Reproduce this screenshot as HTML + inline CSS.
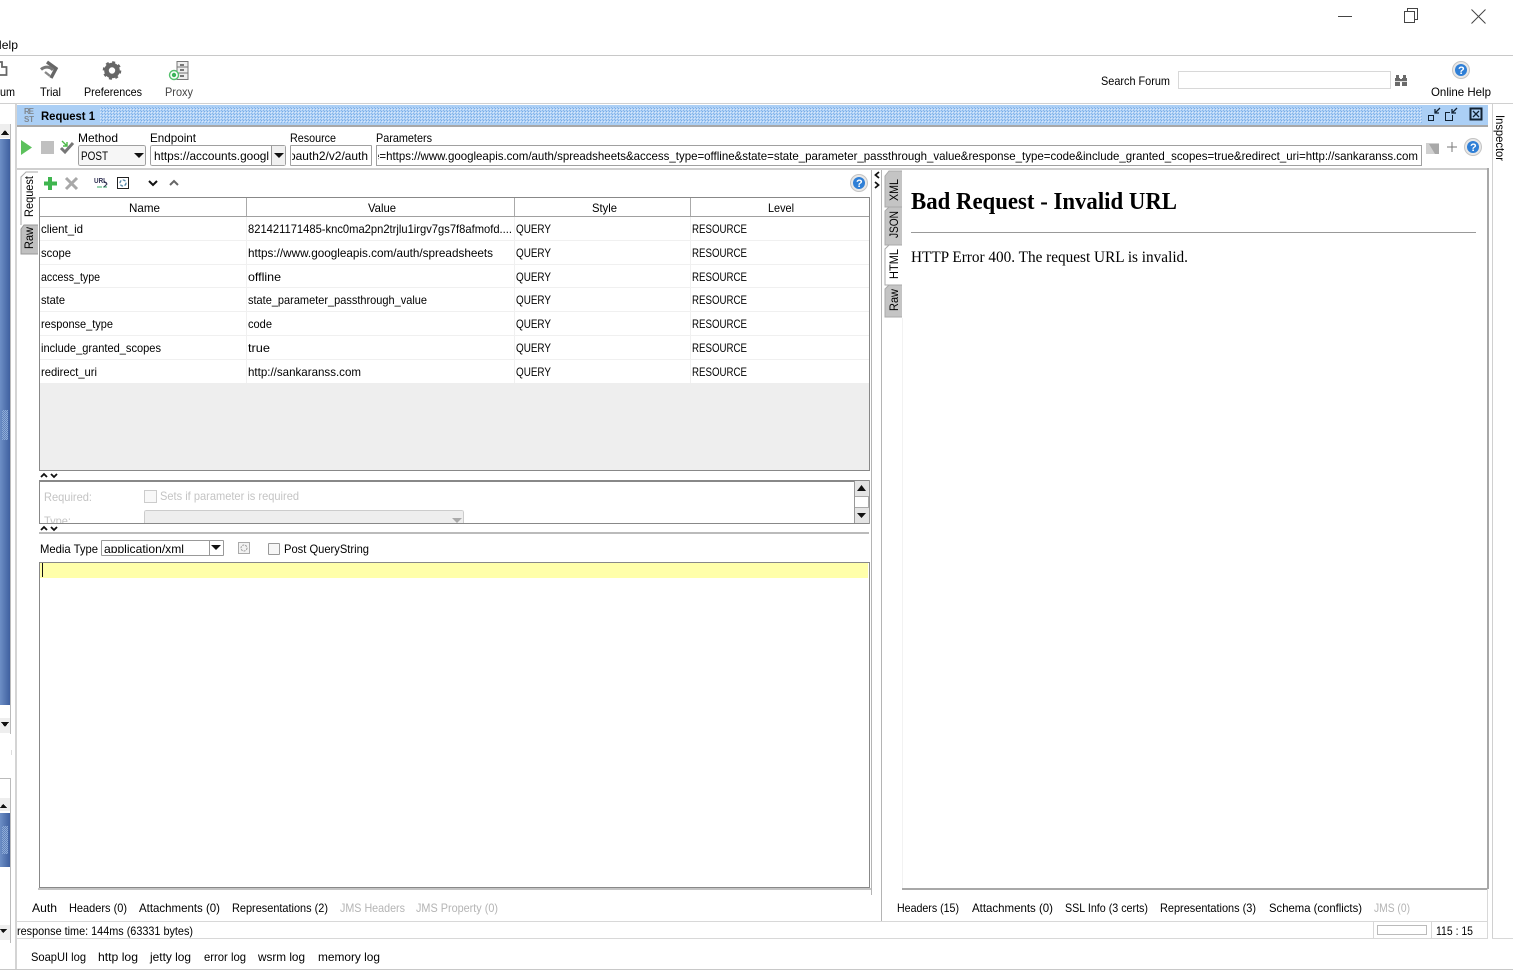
<!DOCTYPE html>
<html><head><meta charset="utf-8"><title>SoapUI</title>
<style>
html,body{margin:0;padding:0;background:#fff;width:1513px;height:970px;overflow:hidden}
body{position:relative}
svg{display:block}
#root{filter:blur(0.3px)}
.sb{position:absolute;left:0;width:10px;background:linear-gradient(to right,#6d8fc6,#3f609f)}
.sd{position:absolute;left:2px;width:6px;background:repeating-conic-gradient(#8fabd6 0 25%,#5f82bc 0 50%) 0 0/2px 2px}
text{font-family:"Liberation Sans",sans-serif;font-size:12px;fill:#000}
.g{fill:#b4b4b4}
.d{fill:#c4c4c4}
.s{font-family:"Liberation Serif",serif;fill:#000}
</style></head><body>
<svg id="root" width="1513" height="970" viewBox="0 0 1513 970" xmlns="http://www.w3.org/2000/svg" shape-rendering="crispEdges">
<defs>
<pattern id="dots" width="3" height="3" patternUnits="userSpaceOnUse"><rect width="3" height="3" fill="#b2d2f6"/><rect width="1" height="1" fill="#78ace6"/><rect x="1" y="1" width="1" height="1" fill="#dbe9fa"/><rect x="2" y="2" width="1" height="1" fill="#86b6ea"/></pattern>
</defs>

<!-- window controls -->
<g fill="none" stroke="#444" stroke-width="1">
<path d="M1338 16.500H1352"/>
<path d="M1404.500 11.500H1414.500V22.500H1404.500ZM1407.500 11V8.500H1417.500V19.500H1415"/>
<path d="M1471.500 9.500L1485.500 23.500M1485.500 9.500L1471.500 23.500" shape-rendering="auto"/>
</g>

<!-- menu + toolbar -->
<text x="-7" y="49" textLength="25" lengthAdjust="spacingAndGlyphs">Help</text>
<rect x="0" y="55" width="1513" height="1" fill="#c8c8c8"/>
<rect x="0" y="103" width="1513" height="1" fill="#d0d0d0"/>
<g shape-rendering="auto">
<path d="M0 62H2V67H6.500V75H-2" fill="none" stroke="#666" stroke-width="1.800"/>
<path d="M47 62L56 68.500L51 78" fill="none" stroke="#666" stroke-width="3.400"/>
<path d="M41 69.500C45 66 50 66.500 53 70" fill="none" stroke="#777" stroke-width="3"/>
<path d="M45 72L50 76" fill="none" stroke="#888" stroke-width="2.400"/>
<circle cx="112" cy="70.500" r="5.500" fill="none" stroke="#666" stroke-width="4.600"/>
<circle cx="112" cy="70.500" r="8.300" fill="none" stroke="#666" stroke-width="2" stroke-dasharray="3 3.500"/>
<rect x="177" y="61.500" width="11" height="18" fill="#eee" stroke="#777"/>
<path d="M177 67H188M177 73H188" stroke="#777"/>
<rect x="180" y="64" width="4" height="2" fill="#777"/><rect x="180" y="69" width="4" height="2" fill="#777"/><rect x="180" y="75" width="4" height="2" fill="#777"/>
<circle cx="174" cy="75" r="4.500" fill="#fff" stroke="#54c06c" stroke-width="1.400"/><circle cx="174" cy="75" r="2.200" fill="#3cb45a"/>
</g>
<text x="0" y="96" textLength="15" lengthAdjust="spacingAndGlyphs">um</text>
<text x="40" y="96" textLength="21" lengthAdjust="spacingAndGlyphs">Trial</text>
<text x="84" y="96" textLength="58" lengthAdjust="spacingAndGlyphs">Preferences</text>
<text x="165" y="96" textLength="28" lengthAdjust="spacingAndGlyphs" style="fill:#444">Proxy</text>
<text x="1101" y="85" textLength="69" lengthAdjust="spacingAndGlyphs">Search Forum</text>
<rect x="1178.500" y="71.500" width="212" height="17" fill="#fff" stroke="#d8d8d8"/>
<g fill="#6a6a6a"><rect x="1395" y="78" width="5" height="8"/><rect x="1402" y="78" width="5" height="8"/><rect x="1396" y="75" width="3" height="3"/><rect x="1403" y="75" width="3" height="3"/><rect x="1400" y="79" width="2" height="3"/><rect x="1395" y="81" width="12" height="1" fill="#ddd"/></g>
<g shape-rendering="auto">
<circle cx="1461" cy="70" r="8.500" fill="#e8e8e8" stroke="#c4c4c4"/><circle cx="1461" cy="70" r="6" fill="#2f7fd6"/>
<text x="1458" y="74" style="font-size:11px;font-weight:bold;fill:#fff">?</text>
</g>
<text x="1431" y="96" textLength="60" lengthAdjust="spacingAndGlyphs">Online Help</text>

<!-- outer structure left -->
<rect x="15" y="104" width="2" height="866" fill="#d4d4d4"/>
<rect x="10" y="124" width="1" height="610" fill="#bbb"/>
<rect x="0" y="124" width="10" height="14" fill="#eee"/>
<path d="M1 135L5 130L9 135Z" fill="#111"/>
<rect x="0" y="718" width="10" height="15" fill="#eee"/>
<path d="M1 722L5 727L9 722Z" fill="#111"/>
<rect x="10" y="778" width="1" height="165" fill="#bbb"/>
<rect x="0" y="778" width="10" height="1" fill="#bbb"/>
<rect x="0" y="798" width="10" height="13" fill="#eee"/>
<path d="M0 808L3 804L7 808Z" fill="#111"/>
<rect x="0" y="925" width="10" height="15" fill="#eee"/>
<path d="M0 929L3 933L7 929Z" fill="#111"/>
<rect x="11" y="750" width="1" height="5" fill="#ddd"/>

<!-- title bar -->
<rect x="17" y="105" width="1471" height="20" fill="#abcff5"/>
<rect x="17" y="125" width="1471" height="2" fill="#a8a8a8"/>
<rect x="100" y="107" width="1322" height="16" fill="url(#dots)"/>
<text x="24" y="114" textLength="10" style="font-size:8px;font-weight:bold;fill:#808890">RE</text>
<text x="24" y="122" textLength="10" style="font-size:8px;font-weight:bold;fill:#808890">ST</text>
<text x="41" y="120" textLength="54" lengthAdjust="spacingAndGlyphs" style="font-weight:bold;fill:#000">Request 1</text>
<g fill="none" stroke="#123" stroke-width="1.300">
<rect x="1428.500" y="115.500" width="5" height="5"/><path d="M1440 108L1435 113M1435 109V113H1439" shape-rendering="auto"/>
<path d="M1450 112.500H1445.500V120.500H1452.500V115"/><path d="M1457 108L1452 113M1452 109V113H1456" shape-rendering="auto"/>
<rect x="1470.500" y="108.500" width="11" height="11" stroke-width="1.600"/><path d="M1473 111L1479 117M1479 111L1473 117" shape-rendering="auto"/>
</g>

<!-- request toolbar -->
<path d="M21 140L32 147.500L21 155Z" fill="#5cc15c" shape-rendering="auto"/>
<rect x="41" y="141" width="13" height="13" fill="#c0c0c0"/>
<path d="M61 148L65 152L73 143" fill="none" stroke="#777" stroke-width="3" shape-rendering="auto"/>
<path d="M62 141L67 146M67 142V146H63" fill="none" stroke="#4cb848" stroke-width="1.400" shape-rendering="auto"/>
<text x="78" y="142" textLength="40" lengthAdjust="spacingAndGlyphs">Method</text>
<text x="150" y="142" textLength="46" lengthAdjust="spacingAndGlyphs">Endpoint</text>
<text x="290" y="142" textLength="46" lengthAdjust="spacingAndGlyphs">Resource</text>
<text x="376" y="142" textLength="56" lengthAdjust="spacingAndGlyphs">Parameters</text>
<g fill="#fff" stroke="#a0a0a0" stroke-width="1">
<rect x="78.500" y="145.500" width="67" height="20" rx="2" fill="#f6f6f6"/>
<rect x="150.500" y="145.500" width="135" height="20" rx="2"/>
<rect x="290.500" y="145.500" width="81" height="20" rx="1"/>
<rect x="376.500" y="145.500" width="1045" height="20"/>
</g>
<rect x="271" y="146" width="14" height="19" fill="#f0f0f0"/><rect x="271" y="146" width="1" height="19" fill="#999"/>
<path d="M134 153H144L139 158Z" fill="#111" shape-rendering="auto"/>
<path d="M274 153H284L279 158Z" fill="#111" shape-rendering="auto"/>
<text x="81" y="160" textLength="27" lengthAdjust="spacingAndGlyphs">POST</text>
<text x="154" y="160" textLength="115" lengthAdjust="spacingAndGlyphs">https://accounts.googl</text>
<svg x="292" y="147" width="78" height="18"><text x="-3" y="13" textLength="79" lengthAdjust="spacingAndGlyphs">oauth2/v2/auth</text></svg>
<svg x="378" y="147" width="1042" height="18"><text x="-5" y="13" textLength="1045" lengthAdjust="spacingAndGlyphs">e=https://www.googleapis.com/auth/spreadsheets&amp;access_type=offline&amp;state=state_parameter_passthrough_value&amp;response_type=code&amp;include_granted_scopes=true&amp;redirect_uri=http://sankaranss.com</text></svg>
<rect x="1426" y="143" width="13" height="11" fill="#d0d0d0"/><path d="M1429 144L1435 154H1439V144Z" fill="#a8a8a8" shape-rendering="auto"/>
<path d="M1452 142V152M1447 147H1457" stroke="#777" stroke-width="1.300"/>
<g shape-rendering="auto"><circle cx="1473" cy="147" r="8.500" fill="#e8e8e8" stroke="#c4c4c4"/><circle cx="1473" cy="147" r="6" fill="#2f7fd6"/>
<text x="1470" y="151" style="font-size:11px;font-weight:bold;fill:#fff">?</text></g>
<rect x="17" y="168" width="1471" height="2" fill="#cfcfcf"/>

<!-- left tabs -->
<path d="M38 172H26L21 177V225" fill="#fff" stroke="#aaa" stroke-width="1" shape-rendering="auto"/>
<path d="M38 225H24L21 229V254H38V225Z" fill="#c0c0c0" shape-rendering="auto"/>
<path d="M38 225H24L21 229V254H38" fill="none" stroke="#999" stroke-width="1" shape-rendering="auto"/>
<text transform="translate(33,217) rotate(-90)" textLength="41" lengthAdjust="spacingAndGlyphs">Request</text>
<text transform="translate(33,249) rotate(-90)" textLength="22" lengthAdjust="spacingAndGlyphs">Raw</text>

<!-- param toolbar -->
<path d="M50 177V190M44 183.500H57" stroke="#3fb54f" stroke-width="3.600"/>
<path d="M66 178L77 189M77 178L66 189" stroke="#a8a8a8" stroke-width="3" shape-rendering="auto"/>
<text x="94" y="183" textLength="13" lengthAdjust="spacingAndGlyphs" style="font-size:7px;font-weight:bold;fill:#335">URL</text>
<path d="M97 187H102M103 187H107" stroke="#3a6" stroke-width="1"/><path d="M104 181L107 184L104 187" fill="none" stroke="#335" shape-rendering="auto"/>
<rect x="117.500" y="177.500" width="11" height="11" fill="#fff" stroke="#222"/><circle cx="123" cy="183" r="3" fill="none" stroke="#58a" stroke-width="1.300" stroke-dasharray="3 1.500" shape-rendering="auto"/>
<path d="M149 181L153 185L157 181" fill="none" stroke="#111" stroke-width="2" shape-rendering="auto"/>
<path d="M170 185L174 181L178 185" fill="none" stroke="#666" stroke-width="2" shape-rendering="auto"/>
<g shape-rendering="auto"><circle cx="859" cy="183" r="8.500" fill="#e8e8e8" stroke="#c4c4c4"/><circle cx="859" cy="183" r="6" fill="#2f7fd6"/>
<text x="856" y="187" style="font-size:11px;font-weight:bold;fill:#fff">?</text></g>

<!-- table -->
<rect x="39.500" y="197.500" width="830" height="273" fill="#fff" stroke="#888"/>
<rect x="40" y="383" width="829" height="87" fill="#eeeeee"/>
<rect x="40" y="216" width="829" height="1" fill="#a0a0a0"/>
<g fill="#aaa"><rect x="246" y="198" width="1" height="18"/><rect x="514" y="198" width="1" height="18"/><rect x="690" y="198" width="1" height="18"/></g>
<g fill="#f0f0f0">
<rect x="40" y="240" width="829" height="1"/><rect x="40" y="264" width="829" height="1"/><rect x="40" y="287" width="829" height="1"/><rect x="40" y="311" width="829" height="1"/><rect x="40" y="335" width="829" height="1"/><rect x="40" y="359" width="829" height="1"/>
<rect x="246" y="217" width="1" height="166"/><rect x="514" y="217" width="1" height="166"/><rect x="690" y="217" width="1" height="166"/>
</g>
<text x="129" y="212" textLength="31" lengthAdjust="spacingAndGlyphs">Name</text>
<text x="368" y="212" textLength="28" lengthAdjust="spacingAndGlyphs">Value</text>
<text x="592" y="212" textLength="25" lengthAdjust="spacingAndGlyphs">Style</text>
<text x="768" y="212" textLength="26" lengthAdjust="spacingAndGlyphs">Level</text>

<text x="41" y="233" textLength="42" lengthAdjust="spacingAndGlyphs">client_id</text>
<text x="248" y="233" textLength="264" lengthAdjust="spacingAndGlyphs">821421171485-knc0ma2pn2trjlu1irgv7gs7f8afmofd....</text>
<text x="516" y="233" textLength="35" lengthAdjust="spacingAndGlyphs">QUERY</text>
<text x="692" y="233" textLength="55" lengthAdjust="spacingAndGlyphs">RESOURCE</text>

<text x="41" y="257" textLength="30" lengthAdjust="spacingAndGlyphs">scope</text>
<text x="248" y="257" textLength="245" lengthAdjust="spacingAndGlyphs">https://www.googleapis.com/auth/spreadsheets</text>
<text x="516" y="257" textLength="35" lengthAdjust="spacingAndGlyphs">QUERY</text>
<text x="692" y="257" textLength="55" lengthAdjust="spacingAndGlyphs">RESOURCE</text>

<text x="41" y="281" textLength="59" lengthAdjust="spacingAndGlyphs">access_type</text>
<text x="248" y="281" textLength="33" lengthAdjust="spacingAndGlyphs">offline</text>
<text x="516" y="281" textLength="35" lengthAdjust="spacingAndGlyphs">QUERY</text>
<text x="692" y="281" textLength="55" lengthAdjust="spacingAndGlyphs">RESOURCE</text>

<text x="41" y="304" textLength="24" lengthAdjust="spacingAndGlyphs">state</text>
<text x="248" y="304" textLength="179" lengthAdjust="spacingAndGlyphs">state_parameter_passthrough_value</text>
<text x="516" y="304" textLength="35" lengthAdjust="spacingAndGlyphs">QUERY</text>
<text x="692" y="304" textLength="55" lengthAdjust="spacingAndGlyphs">RESOURCE</text>

<text x="41" y="328" textLength="72" lengthAdjust="spacingAndGlyphs">response_type</text>
<text x="248" y="328" textLength="24" lengthAdjust="spacingAndGlyphs">code</text>
<text x="516" y="328" textLength="35" lengthAdjust="spacingAndGlyphs">QUERY</text>
<text x="692" y="328" textLength="55" lengthAdjust="spacingAndGlyphs">RESOURCE</text>

<text x="41" y="352" textLength="120" lengthAdjust="spacingAndGlyphs">include_granted_scopes</text>
<text x="248" y="352" textLength="22" lengthAdjust="spacingAndGlyphs">true</text>
<text x="516" y="352" textLength="35" lengthAdjust="spacingAndGlyphs">QUERY</text>
<text x="692" y="352" textLength="55" lengthAdjust="spacingAndGlyphs">RESOURCE</text>

<text x="41" y="376" textLength="56" lengthAdjust="spacingAndGlyphs">redirect_uri</text>
<text x="248" y="376" textLength="113" lengthAdjust="spacingAndGlyphs">http://sankaranss.com</text>
<text x="516" y="376" textLength="35" lengthAdjust="spacingAndGlyphs">QUERY</text>
<text x="692" y="376" textLength="55" lengthAdjust="spacingAndGlyphs">RESOURCE</text>

<!-- splitter arrows -->
<g fill="none" stroke="#111" stroke-width="1.800" shape-rendering="auto">
<path d="M41 477L44 474L47 477M51 474L54 477L57 474"/>
<path d="M41 530L44 527L47 530M51 527L54 530L57 527"/>
</g>

<!-- details box -->
<svg x="39" y="480" width="831" height="44">
<rect x="0.500" y="0.500" width="830" height="43" fill="#fff"/>
<text x="5" y="21" textLength="48" lengthAdjust="spacingAndGlyphs" class="d">Required:</text>
<rect x="105.500" y="10.500" width="12" height="12" fill="#f8f8f8" stroke="#ccc"/>
<text x="121" y="20" textLength="139" lengthAdjust="spacingAndGlyphs" class="d">Sets if parameter is required</text>
<text x="5" y="45" textLength="27" lengthAdjust="spacingAndGlyphs" class="d">Type:</text>
<rect x="105.500" y="30.500" width="319" height="20" rx="2" fill="#eeeeee" stroke="#ccc"/>
<path d="M413 38H423L418 43Z" fill="#aaa" shape-rendering="auto"/>
</svg>
<rect x="39" y="480" width="831" height="2" fill="#888"/>
<rect x="39" y="523" width="831" height="1" fill="#888"/>
<rect x="39" y="480" width="1" height="44" fill="#888"/><rect x="869" y="480" width="1" height="44" fill="#999"/>
<rect x="854" y="481" width="15" height="15" fill="#e4e4e4"/><rect x="854" y="508" width="15" height="15" fill="#e4e4e4"/>
<rect x="854.500" y="496.500" width="14" height="11" fill="#fff" stroke="#aaa" stroke-width="1"/>
<rect x="854" y="481" width="1" height="42" fill="#999"/>
<path d="M857 491L861.500 485L866 491Z M857 513H866L861.500 518Z" fill="#111" shape-rendering="auto"/>
<rect x="39" y="532" width="830" height="2" fill="#bbb"/>

<!-- media type row -->
<text x="40" y="553" textLength="58" lengthAdjust="spacingAndGlyphs">Media Type</text>
<rect x="101.500" y="540.500" width="122" height="15" rx="1" fill="#fff" stroke="#999"/>
<svg x="103" y="541" width="105" height="12"><text x="1" y="12" textLength="80" lengthAdjust="spacingAndGlyphs">application/xml</text></svg>
<rect x="209" y="541" width="1" height="14" fill="#999"/>
<path d="M211 545H221L216 550Z" fill="#111" shape-rendering="auto"/>
<rect x="238.500" y="542.500" width="11" height="11" fill="#f2f2f2" stroke="#aaa"/><circle cx="244" cy="548" r="3" fill="none" stroke="#999" stroke-dasharray="2 1" shape-rendering="auto"/>
<rect x="268.500" y="543.500" width="11" height="11" rx="1" fill="#f6f6f6" stroke="#999"/>
<text x="284" y="553" textLength="85" lengthAdjust="spacingAndGlyphs">Post QueryString</text>

<!-- editor -->
<rect x="39.500" y="562.500" width="830" height="325" fill="#fff" stroke="#888"/>
<rect x="40" y="563" width="828" height="15" fill="#ffffaa"/>
<rect x="42" y="563" width="1" height="14" fill="#111"/>
<rect x="38" y="888" width="834" height="2" fill="#c4c4c4"/>
<rect x="871" y="170" width="1" height="725" fill="#b4b4b4"/>
<rect x="881" y="170" width="1" height="751" fill="#b4b4b4"/>

<!-- horizontal splitter -->
<g fill="none" stroke="#111" stroke-width="1.800" shape-rendering="auto">
<path d="M879 172L875.500 175L879 178M875 182L878.500 185L875 188"/>
</g>

<!-- right tabs -->
<g shape-rendering="auto">
<path d="M902 171H889L885 176V207H902Z" fill="#c4c4c4"/>
<path d="M902 207H889L885 211V245H902Z" fill="#c4c4c4"/>
<path d="M902 285H889L885 289V317H902Z" fill="#c4c4c4"/>
<path d="M902 245H889L885 249V285H902Z" fill="#fff"/>
<g fill="none" stroke="#aaa" stroke-width="1">
<path d="M902 171H889L885 176V207H902"/>
<path d="M902 207H889L885 211V245H902"/>
<path d="M902 285H889L885 289V317H902"/>
<path d="M902 245H889L885 249V285H902"/>
</g>
</g>
<text transform="translate(898,201) rotate(-90)" textLength="22" lengthAdjust="spacingAndGlyphs">XML</text>
<text transform="translate(898,238) rotate(-90)" textLength="27" lengthAdjust="spacingAndGlyphs">JSON</text>
<text transform="translate(898,279) rotate(-90)" textLength="30" lengthAdjust="spacingAndGlyphs">HTML</text>
<text transform="translate(898,311) rotate(-90)" textLength="22" lengthAdjust="spacingAndGlyphs">Raw</text>

<!-- html response -->
<text class="s" x="911" y="209" textLength="266" lengthAdjust="spacingAndGlyphs" style="font-size:24px;font-weight:bold">Bad Request - Invalid URL</text>
<rect x="911" y="232" width="565" height="1" fill="#999"/>
<text class="s" x="911" y="262" textLength="277" lengthAdjust="spacingAndGlyphs" style="font-size:16px">HTTP Error 400. The request URL is invalid.</text>
<rect x="902" y="318" width="1" height="571" fill="#f2f2f2"/>
<rect x="902" y="888" width="586" height="2" fill="#a8a8a8"/>
<rect x="1487" y="168" width="2" height="721" fill="#a8a8a8"/>

<!-- inspector -->
<rect x="1492" y="104" width="1" height="834" fill="#d0d0d0"/>
<text transform="translate(1496,115) rotate(90)" textLength="46" lengthAdjust="spacingAndGlyphs">Inspector</text>

<!-- bottom tabs -->
<text x="32" y="912" textLength="25" lengthAdjust="spacingAndGlyphs">Auth</text>
<text x="69" y="912" textLength="58" lengthAdjust="spacingAndGlyphs">Headers (0)</text>
<text x="139" y="912" textLength="81" lengthAdjust="spacingAndGlyphs">Attachments (0)</text>
<text x="232" y="912" textLength="96" lengthAdjust="spacingAndGlyphs">Representations (2)</text>
<text x="340" y="912" textLength="65" lengthAdjust="spacingAndGlyphs" class="g">JMS Headers</text>
<text x="416" y="912" textLength="82" lengthAdjust="spacingAndGlyphs" class="g">JMS Property (0)</text>
<text x="897" y="912" textLength="62" lengthAdjust="spacingAndGlyphs">Headers (15)</text>
<text x="972" y="912" textLength="81" lengthAdjust="spacingAndGlyphs">Attachments (0)</text>
<text x="1065" y="912" textLength="83" lengthAdjust="spacingAndGlyphs">SSL Info (3 certs)</text>
<text x="1160" y="912" textLength="96" lengthAdjust="spacingAndGlyphs">Representations (3)</text>
<text x="1269" y="912" textLength="93" lengthAdjust="spacingAndGlyphs">Schema (conflicts)</text>
<text x="1374" y="912" textLength="36" lengthAdjust="spacingAndGlyphs" class="g">JMS (0)</text>

<!-- status bar -->
<rect x="17" y="921" width="1471" height="1" fill="#d8d8d8"/>
<rect x="17" y="938" width="1471" height="1" fill="#d8d8d8"/>
<rect x="1492" y="938" width="21" height="1" fill="#d8d8d8"/>
<rect x="1487" y="889" width="1" height="49" fill="#d8d8d8"/>
<text x="17" y="935" textLength="176" lengthAdjust="spacingAndGlyphs">response time: 144ms (63331 bytes)</text>
<rect x="1373" y="922" width="1" height="16" fill="#d8d8d8"/>
<rect x="1431" y="922" width="1" height="16" fill="#d8d8d8"/>
<rect x="1377.500" y="925.500" width="49" height="9" fill="#fff" stroke="#bbb"/>
<text x="1436" y="935" textLength="37" lengthAdjust="spacingAndGlyphs">115 : 15</text>

<!-- log tabs -->
<text x="31" y="961" textLength="55" lengthAdjust="spacingAndGlyphs">SoapUI log</text>
<text x="98" y="961" textLength="40" lengthAdjust="spacingAndGlyphs">http log</text>
<text x="150" y="961" textLength="41" lengthAdjust="spacingAndGlyphs">jetty log</text>
<text x="204" y="961" textLength="42" lengthAdjust="spacingAndGlyphs">error log</text>
<text x="258" y="961" textLength="47" lengthAdjust="spacingAndGlyphs">wsrm log</text>
<text x="318" y="961" textLength="62" lengthAdjust="spacingAndGlyphs">memory log</text>
<rect x="0" y="969" width="1513" height="1" fill="#c8c8c8"/>
</svg>
<div class="sb" style="top:139px;height:566px"></div>
<div class="sd" style="top:410px;height:30px"></div>
<div class="sb" style="top:813px;height:54px"></div>
<div class="sd" style="top:826px;height:28px"></div>
</body></html>
